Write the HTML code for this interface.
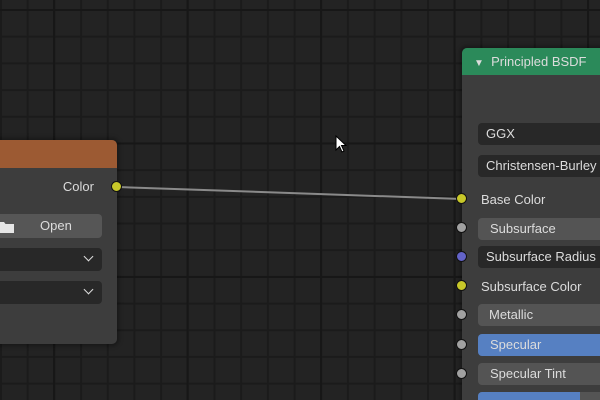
<!DOCTYPE html>
<html style="width:600px;height:400px;overflow:hidden"><head><style>
*{margin:0;padding:0;box-sizing:border-box}
body{width:600px;height:400px;overflow:hidden;position:relative;font-family:"Liberation Sans","DejaVu Sans",sans-serif;font-size:13px;color:#dcdcdc;
background-color:#232323;
background-image:
linear-gradient(90deg,#171717 2px,transparent 2px),
linear-gradient(0deg,#171717 2px,transparent 2px),
linear-gradient(90deg,#1b1b1b 2px,transparent 2px),
linear-gradient(0deg,#1b1b1b 2px,transparent 2px);
background-size:133.5px 133.5px,133.5px 133.5px,26.7px 26.7px,26.7px 26.7px;
background-position:53px 0,0 11px,0 0,0 11px;}
.abs{position:absolute}
.node{position:absolute;background:#3d3d3d;border-radius:5px;box-shadow:0 0 4px 2px rgba(0,0,0,.35);overflow:hidden}
.sock{position:absolute;width:11px;height:11px;border-radius:50%;border:1px solid #111}
.field{position:absolute;border-radius:4px;padding-left:8px;line-height:22px;height:22px;white-space:nowrap}
.chev{position:absolute;width:7px;height:7px;border-right:1.5px solid #ddd;border-bottom:1.5px solid #ddd;transform:rotate(45deg)}
</style></head><body>
<svg class="abs" style="left:0;top:0" width="600" height="400"><line x1="118" y1="187" x2="462" y2="199" stroke="#8a8a8a" stroke-width="2"/></svg>

<div class="node" style="left:-6px;top:140px;width:123px;height:204px;">
 <div style="height:28px;background:#9c5a33"></div>
 <div class="abs" style="right:23px;top:39px">Color</div>
 <div class="field" style="left:0;top:74px;width:108px;height:24px;background:#565656;line-height:24px;padding-left:46px">Open</div>
 <svg class="abs" style="left:4px;top:80px" width="16" height="13"><path d="M0 2 H6 L7.5 4 H16 V13 H0 Z" fill="#e6e6e6"/></svg>
 <div class="field" style="left:0;top:108px;width:108px;height:23px;background:#282828"></div>
 <div class="chev" style="left:91px;top:113px"></div>
 <div class="field" style="left:0;top:141px;width:108px;height:23px;background:#282828"></div>
 <div class="chev" style="left:91px;top:146px"></div>
</div>
<div class="sock" style="left:111px;top:181px;background:#c7c729"></div>

<div class="node" style="left:462px;top:48px;width:150px;height:360px;">
 <div style="height:27px;background:#2b8a5a;padding-left:12px;line-height:27px"><span style="font-size:10px">&#9660;</span>&nbsp; Principled BSDF</div>
 <div class="field" style="left:16px;top:75px;width:140px;background:#282828">GGX</div>
 <div class="field" style="left:16px;top:107px;width:140px;background:#282828">Christensen-Burley</div>
 <div class="abs" style="left:19px;top:144px">Base Color</div>
 <div class="field" style="left:16px;top:170px;width:140px;background:#545454;padding-left:12px">Subsurface</div>
 <div class="field" style="left:16px;top:198px;width:140px;background:#282828">Subsurface Radius</div>
 <div class="abs" style="left:19px;top:231px">Subsurface Color</div>
 <div class="field" style="left:16px;top:256px;width:140px;background:#545454;padding-left:11px">Metallic</div>
 <div class="field" style="left:16px;top:286px;width:140px;background:#5680c2;padding-left:12px">Specular</div>
 <div class="field" style="left:16px;top:315px;width:140px;background:#545454;padding-left:12px">Specular Tint</div>
 <div class="field" style="left:16px;top:344px;width:140px;background:#545454"></div>
 <div class="abs" style="left:16px;top:344px;width:102px;height:22px;background:#5680c2;border-radius:4px 0 0 4px"></div>
</div>
<div class="sock" style="left:456px;top:193px;background:#c7c729"></div>
<div class="sock" style="left:456px;top:222px;background:#a1a1a1"></div>
<div class="sock" style="left:456px;top:251px;background:#6363c7"></div>
<div class="sock" style="left:456px;top:280px;background:#c7c729"></div>
<div class="sock" style="left:456px;top:309px;background:#a1a1a1"></div>
<div class="sock" style="left:456px;top:339px;background:#a1a1a1"></div>
<div class="sock" style="left:456px;top:368px;background:#a1a1a1"></div>

<svg class="abs" style="left:335px;top:135px" width="14" height="20"><path d="M1 1 L1 15 L4.5 11.5 L7 17 L9 16 L6.5 10.5 L11 10.5 Z" fill="#fff" stroke="#000" stroke-width="1"/></svg>
</body></html>
